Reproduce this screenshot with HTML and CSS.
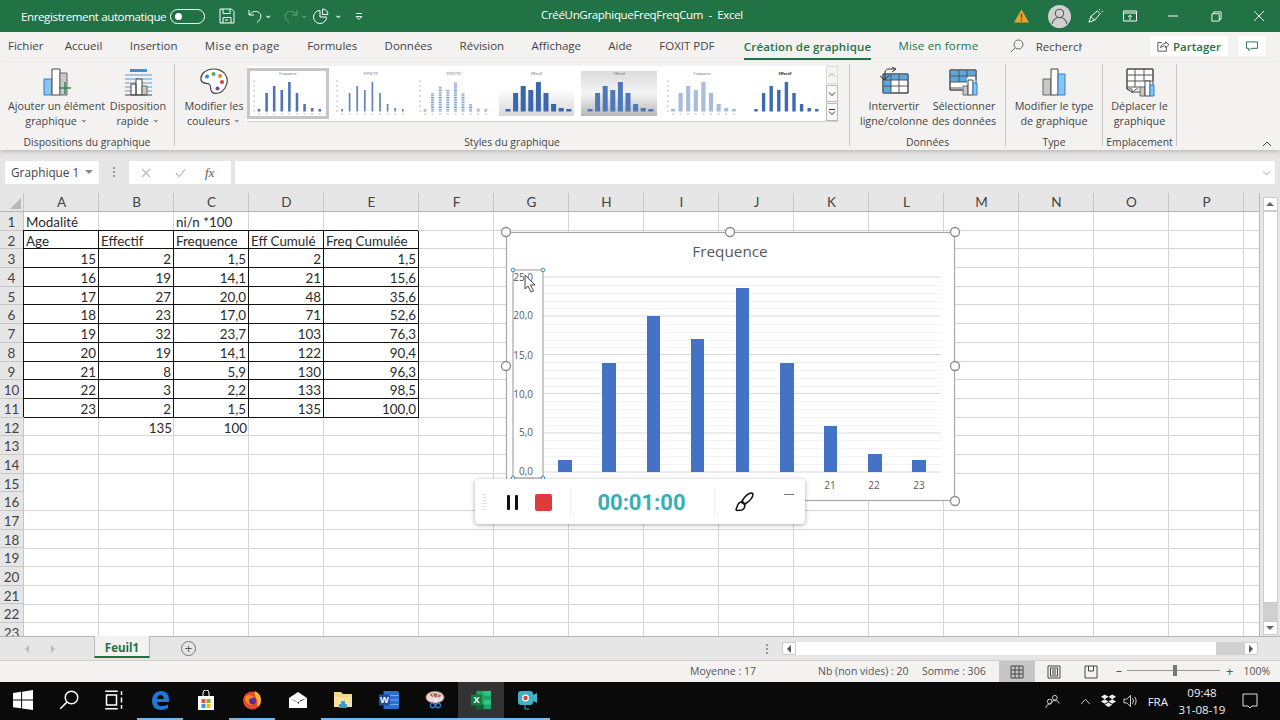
FILE: index.html
```html
<!DOCTYPE html>
<html lang="fr">
<head>
    <meta charset="UTF-8">
    <title>CrééUnGraphiqueFreqFreqCum - Excel</title>
    <link rel="stylesheet" href="styles.css">
</head>
<body>
    <svg class="defs" width="0" height="0">
        <symbol id="thumb-bars" viewBox="0 0 76 45">
            <path d="M9 40.500V38M16.600 40.500V22M24.200 40.500V15M31.800 40.500V19M39.400 40.500V11M47 40.500V22M54.600 40.500V33M62.200 40.500V37M69.800 40.500V38"/>
        </symbol>
        <symbol id="thumb-axis" viewBox="0 0 76 45">
            <path class="ticks" d="M3 10h2M3 15h2M3 20h2M3 25h2M3 30h2M3 35h2M3 40h2M8 43h2M15.600 43h2M23.200 43h2M30.800 43h2M38.400 43h2M46 43h2M53.600 43h2M61.200 43h2M68.800 43h2"/>
        </symbol>
    </svg>

    <!-- barre de titre -->
    <header class="titlebar">
        <span class="autosave">Enregistrement automatique</span>
        <span class="toggle"><i></i></span>
        <svg class="qa qa-save" viewBox="0 0 16 16"><path d="M1 1h11.500L15 3.500V15H1zM4 1v4.500h7V1M4 15v-5.500h8V15M6 12h3" /></svg>
        <svg class="qa qa-undo" viewBox="0 0 16 16"><path d="M2 2v5h5M2.500 7C5 3 9 2.500 12 4.500c3 2.500 2.500 6.500-2 10"/></svg>
        <span class="qa-caret">&#8964;</span>
        <svg class="qa qa-redo" viewBox="0 0 16 16"><path d="M14 2v5H9M13.500 7C11 3 7 2.500 4 4.500c-3 2.500-2.500 6.500 2 10"/></svg>
        <span class="qa-caret dim">&#8964;</span>
        <svg class="qa qa-pie" viewBox="0 0 16 16"><path d="M7 2.500a6.500 6.500 0 1 0 6.500 6.500H7zM9.500 1a6 6 0 0 1 5.500 5.500H9.500z"/></svg>
        <span class="qa-caret">&#8964;</span>
        <svg class="qa qa-more" viewBox="0 0 10 10"><path d="M2 2.500h6M2 5.500h6l-3 3z"/></svg>
        <span class="doc-title">CrééUnGraphiqueFreqFreqCum &nbsp;-&nbsp; Excel</span>
        <div class="title-right">
            <svg class="warn" viewBox="0 0 16 14"><path d="M8 0l8 14H0z" fill="#e9a32c"/><path d="M8 4.500v5M8 10.500v2" stroke="#6b4a12" stroke-width="1.400"/></svg>
            <span class="avatar"><svg viewBox="0 0 22 22"><circle cx="11" cy="8" r="4"/><path d="M4 18c1-5 4-6 7-6s6 1 7 6"/></svg></span>
            <svg class="tb-ico pen" viewBox="0 0 16 16"><path d="M1 14l2-6 7-6 3 3-6 7zM3 8l4 4M12 1l1-1M14.500 3l1.500-.5"/></svg>
            <svg class="tb-ico display" viewBox="0 0 14 12"><path d="M.5 1h13v10H.5zM.5 3h13M7 10V5M5 7l2-2 2 2"/></svg>
            <svg class="tb-ico win-min" viewBox="0 0 12 12"><path d="M1 6h10"/></svg>
            <svg class="tb-ico win-max" viewBox="0 0 12 12"><path d="M1 3h8v8H1zM3 3V1h8v8H9"/></svg>
            <svg class="tb-ico win-close" viewBox="0 0 12 12"><path d="M1 1l10 10M11 1L1 11"/></svg>
        </div>
    </header>

    <!-- onglets -->
    <nav class="tabs">
        <a class="tab-first">Fichier</a><a>Accueil</a><a>Insertion</a><a class="tab-wide">Mise en page</a><a>Formules</a><a>Données</a><a>Révision</a><a>Affichage</a><a>Aide</a><a>FOXIT PDF</a>
        <a class="tab-active">Création de graphique</a>
        <a class="tab-context">Mise en forme</a>
        <span class="search">
            <svg viewBox="0 0 14 14"><circle cx="8.500" cy="5.500" r="4.500"/><path d="M5.300 8.700L.7 13.300"/></svg>
            <span class="search-text">Recherch</span>
        </span>
        <span class="share">
            <svg viewBox="0 0 14 14"><path d="M6 3H1v10h10V8M4 9c1-3 3-5 6-5V2l4 3.500L10 9V7C8 7 6 7.500 4 9z"/></svg>
            Partager
        </span>
        <span class="comment"><svg viewBox="0 0 14 12"><path d="M1 1h12v7H6L3.500 10.500V8H1z"/></svg></span>
    </nav>

    <!-- ruban -->
    <section class="ribbon">
        <div class="group group-layout">
            <div class="group-body">
                <div class="rb-btn btn-add">
                    <svg viewBox="0 0 30 30">
                        <path class="i-blue" d="M2 12h8v16H2z"/>
                        <path class="i-white" d="M10 2h8v26h-8z"/>
                        <path class="i-gray" d="M18 6h7v22h-7z"/>
                        <path d="M23 15v12M17 21h12" fill="none" stroke="#2e8b57" stroke-width="1.500"/>
                    </svg>
                    <span>Ajouter un élément<br>graphique <b class="caret">&#8964;</b></span>
                </div>
                <div class="rb-btn btn-quick">
                    <svg viewBox="0 0 30 30">
                        <path d="M7 2h17v3H7z" fill="#3f8fd6"/>
                        <path d="M2 8h27M2 12h27M2 16h27M2 20h27M2 24h27" stroke="#5b9bd5" fill="none"/>
                        <path class="i-white" d="M8 17h5v11H8zM13 12h6v16h-6z"/>
                        <path class="i-gray" d="M19 19h5v9h-5z"/>
                        <path d="M2 28h27" stroke="#444"/>
                    </svg>
                    <span>Disposition<br>rapide <b class="caret">&#8964;</b></span>
                </div>
            </div>
            <div class="group-label">Dispositions du graphique</div>
        </div>

        <div class="group group-styles">
            <div class="group-body">
                <div class="rb-btn btn-colors">
                    <svg viewBox="0 0 30 30">
                        <path d="M15 2C7 2 1 7 2 13c1 4 6 3 8 4 3 1 0 5 3 8 3 3 10 1 13-4 3-5 3-10 0-14-2-3-7-5-11-5z" fill="#fff" stroke="#444" stroke-width="1.200"/>
                        <circle cx="8" cy="9.500" r="2" fill="#3d85c6"/><circle cx="14.500" cy="7" r="2" fill="#4caf50"/><circle cx="21" cy="9" r="2" fill="#e8862a"/><circle cx="23" cy="15" r="2" fill="#d6403a"/><circle cx="18.500" cy="21.500" r="2" fill="#7b3fa0"/>
                    </svg>
                    <span>Modifier les<br>couleurs <b class="caret">&#8964;</b></span>
                </div>
                <div class="gallery">
                    <div class="thumbs">
                        <div class="thumb thumb-selected"><small>Frequence</small><svg class="t-narrow"><use href="#thumb-axis"/><use href="#thumb-bars"/></svg></div>
                        <div class="thumb"><small>EFFECTIF</small><svg class="t-thin"><use href="#thumb-axis"/><use href="#thumb-bars"/></svg></div>
                        <div class="thumb"><small>EFFECTIF</small><svg class="t-striped"><use href="#thumb-axis"/><use href="#thumb-bars"/></svg></div>
                        <div class="thumb thumb-fade"><small>Effectif</small><svg class="t-wide"><use href="#thumb-bars"/></svg></div>
                        <div class="thumb thumb-dark"><small>Effectif</small><svg class="t-wide t-mid"><use href="#thumb-bars"/></svg></div>
                        <div class="thumb"><small>Frequence</small><svg class="t-pale"><use href="#thumb-axis"/><use href="#thumb-bars"/></svg></div>
                        <div class="thumb"><small class="strong">Effectif</small><svg class="t-solid"><use href="#thumb-bars"/></svg></div>
                    </div>
                    <div class="gallery-scroll">
                        <span class="dim"><svg viewBox="0 0 8 6"><path d="M1 4.500l3-3 3 3"/></svg></span>
                        <span><svg viewBox="0 0 8 6"><path d="M1 1.500l3 3 3-3"/></svg></span>
                        <span><svg viewBox="0 0 8 6"><path d="M1 .5h6M1 2.500l3 3 3-3"/></svg></span>
                    </div>
                </div>
            </div>
            <div class="group-label">Styles du graphique</div>
        </div>

        <div class="group group-data">
            <div class="group-body">
                <div class="rb-btn btn-switch">
                    <svg viewBox="0 0 30 30">
                        <path class="i-white" d="M4 7h25v19H4z"/>
                        <path d="M4 7h25v6H4zM4 13h8v13H4z" fill="#5ba7e0"/>
                        <path d="M4 13h25M4 19h25M12 7v19M20 7v19M4 7h25v19H4z" fill="none" stroke="#555"/>
                        <path d="M1 9l5 4 4-5M6 12V5c0-2 2-3 4-3h6M13 0l4 2-4 3" fill="none" stroke="#333"/>
                    </svg>
                    <span>Intervertir<br>ligne/colonne</span>
                </div>
                <div class="rb-btn btn-select">
                    <svg viewBox="0 0 30 30">
                        <path class="i-white" d="M1 3h26v20H1z"/>
                        <path d="M1 3h26v6H1zM1 9h17v6H1z" fill="#5ba7e0"/>
                        <path d="M1 9h26M1 15h17M1 21h12M10 3v12M18 3v8M1 3h26v10M1 3v20h12" fill="none" stroke="#555"/>
                        <path class="i-gray" d="M14 19h5v9h-5z"/><path class="i-white" d="M19 13h5v15h-5z"/><path class="i-blue" d="M24 16h4v12h-4z"/>
                    </svg>
                    <span>Sélectionner<br>des données</span>
                </div>
            </div>
            <div class="group-label">Données</div>
        </div>

        <div class="group group-type">
            <div class="group-body">
                <div class="rb-btn btn-fill">
                    <svg viewBox="0 0 30 30">
                        <path class="i-gray" d="M4 12h8v16H4z"/><path class="i-white" d="M12 2h7v26h-7z"/><path class="i-blue" d="M19 7h7v21h-7z"/>
                    </svg>
                    <span>Modifier le type<br>de graphique</span>
                </div>
            </div>
            <div class="group-label">Type</div>
        </div>

        <div class="group group-place">
            <div class="group-body">
                <div class="rb-btn btn-fill">
                    <svg viewBox="0 0 30 30">
                        <path class="i-white" d="M2 2h26v18L22 25H7l-5-3z"/>
                        <path d="M2 8h26M2 14h26M2 20h14M10 2v18M19 2v12M2 2h26v12M2 2v20h5v4l4-4h2" fill="none" stroke="#555"/>
                        <path class="i-gray" d="M15 20h5v9h-5z"/><path class="i-white" d="M20 14h5v15h-5z"/><path class="i-blue" d="M25 18h4v11h-4z"/>
                    </svg>
                    <span>Déplacer le<br>graphique</span>
                </div>
            </div>
            <div class="group-label">Emplacement</div>
        </div>

        <svg class="collapse" viewBox="0 0 10 6"><path d="M1 5l4-4 4 4"/></svg>
    </section>

    <!-- barre de formule -->
    <div class="formula">
        <div class="namebox">Graphique 1<i class="tri-down"></i></div>
        <div class="formula-dots"></div>
        <div class="fx-box">
            <svg class="fx-x" viewBox="0 0 10 10"><path d="M1 1l8 8M9 1L1 9"/></svg>
            <svg class="fx-v" viewBox="0 0 12 10"><path d="M1 5l3.500 4L11 1"/></svg>
            <em>fx</em>
        </div>
        <div class="formula-input"><svg viewBox="0 0 10 6"><path d="M1 1l4 4 4-4"/></svg></div>
    </div>

    <!-- feuille -->
    <main class="sheet">
        <div class="sheet-main">
            <div class="col-head">
                <div class="corner"><i></i></div>
                <span>A</span><span>B</span><span>C</span><span>D</span><span class="w-e">E</span>
                <span>F</span><span>G</span><span>H</span><span>I</span><span>J</span><span>K</span><span>L</span><span>M</span><span>N</span><span>O</span><span>P</span><span class="w-rest"></span>
            </div>
            <div class="sheet-body">
                <div class="row-head">
                    <span>1</span><span>2</span><span>3</span><span>4</span><span>5</span><span>6</span><span>7</span><span>8</span><span>9</span><span>10</span><span>11</span><span>12</span><span>13</span><span>14</span><span>15</span><span>16</span><span>17</span><span>18</span><span>19</span><span>20</span><span>21</span><span>22</span><span>23</span>
                </div>
                <div class="cells">
                    <div class="col-lines">
                        <i></i><i></i><i></i><i></i><i class="w-e"></i>
                        <i></i><i></i><i></i><i></i><i></i><i></i><i></i><i></i><i></i><i></i><i></i>
                    </div>
                    <div class="data">
                        <div>Modalité</div><div></div><div>ni/n *100</div><div></div><div></div>
                    </div>
                    <div class="data boxed">
                        <div>Age</div><div>Effectif</div><div>Frequence</div><div>Eff Cumulé</div><div>Freq Cumulée</div>
                        <div class="n">15</div><div class="n">2</div><div class="n">1,5</div><div class="n">2</div><div class="n">1,5</div>
                        <div class="n">16</div><div class="n">19</div><div class="n">14,1</div><div class="n">21</div><div class="n">15,6</div>
                        <div class="n">17</div><div class="n">27</div><div class="n">20,0</div><div class="n">48</div><div class="n">35,6</div>
                        <div class="n">18</div><div class="n">23</div><div class="n">17,0</div><div class="n">71</div><div class="n">52,6</div>
                        <div class="n">19</div><div class="n">32</div><div class="n">23,7</div><div class="n">103</div><div class="n">76,3</div>
                        <div class="n">20</div><div class="n">19</div><div class="n">14,1</div><div class="n">122</div><div class="n">90,4</div>
                        <div class="n">21</div><div class="n">8</div><div class="n">5,9</div><div class="n">130</div><div class="n">96,3</div>
                        <div class="n">22</div><div class="n">3</div><div class="n">2,2</div><div class="n">133</div><div class="n">98,5</div>
                        <div class="n">23</div><div class="n">2</div><div class="n">1,5</div><div class="n">135</div><div class="n">100,0</div>
                    </div>
                    <div class="data">
                        <div></div><div class="n">135</div><div class="n">100</div><div></div><div></div>
                    </div>

                    <!-- graphique posé sur la feuille -->
                    <svg class="chart" viewBox="500 226 462 282" width="462" height="282">
                        <rect class="chart-frame" x="506.500" y="232.500" width="448" height="268"/>
                        <text class="chart-title" x="730" y="257">Frequence</text>
                        <path class="minor" d="M543 285.500h398M543 293.500h398M543 301.500h398M543 308.500h398M543 324.500h398M543 332.500h398M543 340.500h398M543 347.500h398M543 362.500h398M543 370.500h398M543 378.500h398M543 386.500h398M543 401.500h398M543 409.500h398M543 417.500h398M543 425.500h398M543 440.500h398M543 448.500h398M543 456.500h398M543 464.500h398"/>
                        <path class="major" d="M543 277h398M543 316h398M543 354.500h398M543 393.500h398M543 433h398M543 472h398"/>
                        <g class="bars">
                            <rect x="558" y="460" width="14" height="12"/>
                            <rect x="602" y="363" width="14" height="109"/>
                            <rect x="647" y="316" width="13" height="156"/>
                            <rect x="691" y="339" width="13" height="133"/>
                            <rect x="736" y="288" width="13" height="184"/>
                            <rect x="780" y="363" width="14" height="109"/>
                            <rect x="824" y="426" width="13" height="46"/>
                            <rect x="868" y="454" width="14" height="18"/>
                            <rect x="912" y="460" width="14" height="12"/>
                        </g>
                        <g class="axis-text val">
                            <text x="533" y="281">25,0</text><text x="533" y="319">20,0</text><text x="533" y="359">15,0</text><text x="533" y="398">10,0</text><text x="533" y="436">5,0</text><text x="533" y="475">0,0</text>
                        </g>
                        <g class="axis-text cat">
                            <text x="830" y="489">21</text><text x="874" y="489">22</text><text x="919" y="489">23</text>
                        </g>
                        <rect class="axis-sel" x="513" y="270" width="30" height="208"/>
                        <g class="axis-handles">
                            <circle cx="513" cy="270" r="1.800"/><circle cx="543" cy="270" r="1.800"/><circle cx="513" cy="478" r="1.800"/><circle cx="543" cy="478" r="1.800"/>
                        </g>
                        <g class="handles">
                            <circle cx="506" cy="232" r="4.500"/><circle cx="730" cy="232" r="4.500"/><circle cx="955" cy="232" r="4.500"/>
                            <circle cx="506" cy="366" r="4.500"/><circle cx="955" cy="366" r="4.500"/>
                            <circle cx="506" cy="501" r="4.500"/><circle cx="730" cy="501" r="4.500"/><circle cx="955" cy="501" r="4.500"/>
                        </g>
                        <path class="pointer" d="M525 275v14l3-3 3 6 2.500-1-3-6h4.500z"/>
                    </svg>

                    <!-- enregistreur -->
                    <div class="recorder">
                        <span class="grip"></span>
                        <span class="rec-pause"><i></i><i></i></span>
                        <span class="rec-stop"></span>
                        <span class="rec-sep"></span>
                        <span class="rec-time">00:01:00</span>
                        <span class="rec-sep"></span>
                        <svg class="rec-brush" viewBox="0 0 20 20"><path d="M18 1c-3 0-7 3-10 8l3 3c5-3 8-7 8-10zM7 10c-2 .5-3 2-3.500 3.500L2 17.500l1 1 5-.5c2-1 3-3 3-5z"/></svg>
                        <span class="rec-min"></span>
                    </div>
                </div>
            </div>
        </div>
        <div class="vscroll">
            <span class="vbtn"><i class="tri tri-up"></i></span>
            <span class="vtrack"><span class="vthumb"></span></span>
            <span class="vbtn"><i class="tri tri-dn"></i></span>
        </div>
    </main>

    <!-- onglets de feuille -->
    <div class="sheetbar">
        <span class="nav-arrows"><i class="tri tri-lt"></i><i class="tri tri-rt"></i></span>
        <span class="sheet-tab">Feuil1</span>
        <span class="add-sheet">+</span>
        <span class="sheetbar-dots"></span>
        <div class="hscroll">
            <span class="hbtn"><i class="tri tri-lt dark"></i></span>
            <span class="hthumb"></span>
            <span class="hbtn"><i class="tri tri-rt dark"></i></span>
        </div>
    </div>

    <!-- barre d'état -->
    <footer class="status">
        <span class="st-avg">Moyenne : 17</span>
        <span class="st-count">Nb (non vides) : 20</span>
        <span class="st-sum">Somme : 306</span>
        <span class="view view-on"><svg viewBox="0 0 14 14"><path d="M1 1h12v12H1zM1 5h12M1 9h12M5 1v12M9 1v12"/></svg></span>
        <span class="view"><svg viewBox="0 0 14 14"><path d="M1 1h12v12H1zM3.500 3h7v8h-7zM5 5h4M5 7h4M5 9h4"/></svg></span>
        <span class="view"><svg viewBox="0 0 14 14"><path d="M1 1h12v12H1zM4.500 1v5h5V1"/></svg></span>
        <span class="zoom-minus">&#8211;</span>
        <span class="slider"><i></i></span>
        <span class="zoom-plus">+</span>
        <span class="zoom-val">100%</span>
    </footer>

    <!-- barre des tâches -->
    <div class="taskbar">
        <span class="task"><svg viewBox="0 0 16 16"><path d="M0 2.300l6.500-.9v6.200H0zM7.300 1.300L16 0v7.600H7.300zM0 8.400h6.500v6.200L0 13.700zM7.300 8.400H16V16l-8.700-1.200z" fill="#fff"/></svg></span>
        <span class="task"><svg viewBox="0 0 16 16"><circle cx="10" cy="6" r="5" fill="none" stroke="#fff" stroke-width="1.200"/><path d="M6.500 9.500L1 15" stroke="#fff" stroke-width="1.200"/></svg></span>
        <span class="task"><svg viewBox="0 0 16 16"><path d="M1 1h10M1 15h10M2 4h8v8H2zM14 1v3M14 6v4M14 12v3" fill="none" stroke="#fff" stroke-width="1.200"/></svg></span>
        <span class="task task-open"><svg viewBox="0 0 18 20"><path d="M1 11C1 5 5 1 10 1c5 0 8 3 8 9v2H6c0 3 2 4 5 4 2 0 4-.5 6-1.500V18c-2 1-4 2-7 2-6 0-9-4-9-9zm5-2h7c0-2-1.500-4-3.500-4S6 7 6 9z" fill="#1e78d6"/></svg></span>
        <span class="task"><svg viewBox="0 0 18 20"><path d="M1 6h16v14H1z" fill="#fff"/><path d="M6 6V3a3 3 0 0 1 6 0v3" fill="none" stroke="#fff"/><path d="M4.500 9h4v4h-4z" fill="#e8562a"/><path d="M9.500 9h4v4h-4z" fill="#72b535"/><path d="M4.500 14h4v4h-4z" fill="#2e9be0"/><path d="M9.500 14h4v4h-4z" fill="#f2b71d"/></svg></span>
        <span class="task task-open"><svg viewBox="0 0 20 20"><circle cx="10" cy="10.500" r="9" fill="#e5482d"/><path d="M13 1c4 2 6 5 6 9 0 3-1 5-3 7-1-2 0-6-2-9-1-2-2-4-1-7z" fill="#f7b22e"/><circle cx="9.500" cy="10.500" r="4.500" fill="#5b2a9b"/><path d="M3 7c3-3 8-2 10 1-3-1-6 0-6 3 0 2 2 4 5 3-3 2-9 1-9-7z" fill="#f48a24"/></svg></span>
        <span class="task"><svg viewBox="0 0 20 16"><path d="M1 6l9-6 9 6v10H1z" fill="#fff"/><path d="M1 6l9 4.500L19 6l-7 2.500-1.500 3.500L8 9z" fill="#111"/></svg></span>
        <span class="task task-open"><svg viewBox="0 0 20 18"><path d="M1 1h7l2 2h9v13H1z" fill="#f1d78a"/><path d="M1 6h18v10H1z" fill="#f7e3a1"/><path d="M6 13h8v4H6z" fill="#3f9bc9"/><path d="M8 10h4v3H8z" fill="#3f9bc9"/></svg></span>
        <span class="task task-open"><svg viewBox="0 0 22 20"><path d="M5 0h15a2 2 0 0 1 2 2v16a2 2 0 0 1-2 2H5z" fill="#2b6fd0"/><path d="M8 5h14M8 10h14M8 15h14" stroke="#7fb0ec"/><rect y="4" width="12" height="12" fill="#1b4ea3"/><text class="word-w" x="6" y="13.500">W</text></svg></span>
        <span class="task task-open"><svg viewBox="0 0 22 20"><ellipse cx="11" cy="7" rx="10" ry="6.500" fill="#e8dcd8" stroke="#b55a5a"/><path d="M5 4c4-2 9-2 13 1-3 3-9 4-13-1z" fill="#b55a5a"/><path d="M8 3l6 11M15 3l-5 11" stroke="#fff"/><circle cx="8.500" cy="16" r="2.500" fill="none" stroke="#2e7fc9" stroke-width="1.500"/><circle cx="14.500" cy="16" r="2.500" fill="none" stroke="#2e7fc9" stroke-width="1.500"/></svg></span>
        <span class="task task-open task-active"><svg viewBox="0 0 22 20"><path d="M6 0h16v20H6z" fill="#21a366"/><path d="M14 0h8v5h-8zM14 10h8v5h-8z" fill="#33c481"/><path d="M6 15h8v5H6z" fill="#185c37"/><rect y="4" width="12" height="12" fill="#107c41"/><text class="word-w" x="6" y="13.500">X</text></svg></span>
        <span class="task task-open"><svg viewBox="0 0 20 20"><rect x="1" y="1" width="15" height="14" rx="3" fill="#41b0c4"/><path d="M16 5l4-2v10l-4-2z" fill="#41b0c4"/><circle cx="8.500" cy="8" r="3.500" fill="#fff"/><circle cx="8.500" cy="8" r="2.200" fill="#d6403a"/><path d="M8 15v4h4" fill="none" stroke="#41b0c4"/></svg></span>

        <div class="tray">
            <svg class="tray-people" viewBox="0 0 16 16"><circle cx="10.500" cy="4" r="2.500"/><path d="M6 11c.5-3 2-4 4.500-4S15 8 15 10"/><circle cx="5" cy="8" r="2.500"/><path d="M1 15c.3-3 2-4 4-4"/></svg>
            <svg class="tray-up" viewBox="0 0 12 8"><path d="M1 7l5-5.500L11 7"/></svg>
            <svg class="tray-box" viewBox="0 0 16 14"><path d="M4 0l4 2.500L4 5 0 2.500zM12 0l4 2.500L12 5 8 2.500zM4 5l4 2.500L4 10 0 7.500zM12 5l4 2.500-4 2.500-4-2.500zM4 11l4-2.500 4 2.500-4 2.500z" fill="#eee"/></svg>
            <svg class="tray-vol" viewBox="0 0 16 14"><path d="M1 5h3l4-4v12L4 9H1zM10 4c1.500 2 1.500 4 0 6M12.500 2.500c2 3 2 6 0 9"/></svg>
            <span class="tray-lang">FRA</span>
            <span class="tray-clock">09:48<br>31-08-19</span>
            <svg class="tray-notif" viewBox="0 0 16 16"><path d="M1 1h14v12H10l-2 2-2-2H1z"/></svg>
        </div>
    </div>
</body>
</html>
```

FILE: styles.css
```css
* {
    margin: 0;
    padding: 0;
    box-sizing: border-box;
}

html, body {
    width: 1280px;
    height: 720px;
    overflow: hidden;
}

body {
    display: flex;
    flex-direction: column;
    font-family: "Open Sans", "Noto Sans", sans-serif;
    font-size: 12px;
    color: #444;
    background: #f3f2f1;
}

.defs {
    position: absolute;
}

/* barre de titre */
.titlebar {
    height: 32px;
    flex: none;
    display: flex;
    align-items: center;
    background: #217346;
    color: #fff;
    padding-left: 21px;
    position: relative;
}

.autosave {
    width: 149px;
    font-size: 11.500px;
    letter-spacing: -0.370px;
    white-space: nowrap;
}

.toggle {
    width: 35px;
    height: 15px;
    border: 1px solid #fff;
    border-radius: 8px;
    display: flex;
    align-items: center;
    padding-left: 4px;
    margin-right: 14px;
}

.toggle i {
    width: 7px;
    height: 7px;
    border-radius: 50%;
    background: #fff;
}

.qa {
    width: 16px;
    height: 16px;
    fill: none;
    stroke: #fff;
    stroke-width: 1;
}

.qa-undo { margin-left: 12px; }
.qa-redo { margin-left: 10px; opacity: 0.35; }
.qa-pie { margin-left: 4px; }
.qa-more { width: 10px; height: 10px; margin-left: 11px; }

.qa-caret {
    width: 10px;
    font-size: 10px;
    line-height: 1;
    text-align: center;
    padding-bottom: 5px;
}

.qa-pie + .qa-caret { margin-left: 4px; }
.qa-caret.dim { opacity: 0.35; }

.doc-title {
    position: absolute;
    left: 541px;
    top: 7px;
    font-size: 11.500px;
    letter-spacing: -0.320px;
    white-space: nowrap;
}

.title-right {
    margin-left: auto;
    display: flex;
    align-items: center;
    padding-right: 15px;
}

.warn { width: 15px; height: 14px; margin-right: 19px; }

.avatar {
    width: 23px;
    height: 23px;
    border-radius: 50%;
    background: #d0d0d0;
    margin-right: 17px;
}

.avatar svg {
    display: block;
    fill: none;
    stroke: #555;
    stroke-width: 1;
}

.tb-ico {
    fill: none;
    stroke: #fff;
    stroke-width: 1;
}

.pen { width: 15px; height: 15px; margin-right: 20px; }
.display { width: 14px; height: 12px; margin-right: 30px; }
.win-min { width: 12px; height: 12px; margin-right: 32px; }
.win-max { width: 11px; height: 11px; margin-right: 31px; }
.win-close { width: 12px; height: 12px; }

/* onglets */
.tabs {
    height: 30px;
    flex: none;
    display: flex;
    align-items: center;
    gap: 27.300px;
    padding-left: 8px;
    font-size: 11.500px;
    white-space: nowrap;
    color: #444;
}

.tabs a {
    line-height: 25px;
    height: 28px;
}

.tab-first { margin-right: -6px; }
.tab-wide { letter-spacing: 0.350px; }

.tabs a.tab-active {
    color: #217346;
    font-weight: 600;
    letter-spacing: 0.150px;
    border-bottom: 2px solid #217346;
    height: 26px;
    margin: -1px 0 0 2px;
    line-height: 26px;
}

.tab-context {
    color: #217346;
    letter-spacing: 0.200px;
}

.search {
    display: flex;
    align-items: center;
    margin: -2px 0 0 4px;
}

.search svg {
    width: 14px;
    height: 14px;
    fill: none;
    stroke: #666;
    margin-right: 12px;
}

.search-text {
    width: 46px;
    overflow: hidden;
}

.share {
    display: flex;
    align-items: center;
    justify-content: center;
    gap: 4px;
    width: 78px;
    height: 20px;
    margin-left: 41px;
    margin-top: -2px;
    background: #fff;
    color: #217346;
    font-weight: 600;
}

.share svg {
    width: 12px;
    height: 12px;
    fill: none;
    stroke: #444;
}

.comment {
    width: 28px;
    height: 20px;
    margin-left: -17px;
    margin-top: -2px;
    background: #fff;
    display: flex;
    align-items: center;
    justify-content: center;
}

.comment svg {
    width: 14px;
    height: 11px;
    fill: none;
    stroke: #217346;
}

/* ruban */
.ribbon {
    height: 88px;
    flex: none;
    display: flex;
    position: relative;
    padding-top: 2px;
    font-size: 10.800px;
    color: #444;
    background: #f3f2f1;
    box-shadow: 0 2px 4px rgba(0, 0, 0, 0.18);
    z-index: 2;
}

.group {
    height: 82px;
    display: flex;
    flex-direction: column;
    border-right: 1px solid #c8c6c4;
    flex: none;
}

.group-body {
    flex: 1;
    display: flex;
}

.group-label {
    text-align: center;
    line-height: 14px;
    font-size: 10.400px;
    white-space: nowrap;
    margin-bottom: -3px;
}

.group-layout { width: 175px; }
.group-styles { width: 675px; }
.group-data { width: 156px; }
.group-type { width: 97px; }
.group-place { width: 74px; }

.rb-btn {
    display: flex;
    flex-direction: column;
    align-items: center;
    text-align: center;
    line-height: 15px;
    white-space: nowrap;
    padding-top: 3px;
}

.rb-btn svg {
    width: 30px;
    height: 30px;
    margin-bottom: 1px;
}

.btn-add { width: 107px; margin-left: 3px; }
.btn-quick { width: 56px; }
.btn-colors { width: 60px; margin-left: 9px; }
.btn-switch { width: 74px; margin-left: 7px; }
.btn-select { width: 66px; }
.btn-fill { width: 100%; }

.caret {
    font-weight: 400;
    font-size: 9px;
    position: relative;
    top: -3px;
}

.i-blue { fill: #8cc4ec; stroke: #2b7cd3; }
.i-white { fill: #fff; stroke: #444; }
.i-gray { fill: #c8c8c6; stroke: #666; }

.gallery {
    width: 591px;
    height: 56px;
    margin: 2px 0 0 3px;
    display: flex;
    border-bottom: 1px solid #d0d0d0;
}

.thumbs {
    width: 579px;
    background: #fff;
    display: flex;
    gap: 7px;
    padding: 5px 3px;
}

.thumb {
    width: 76px;
    height: 45px;
    position: relative;
    text-align: center;
}

.thumb small {
    display: block;
    font-size: 3.500px;
    line-height: 6px;
    color: #666;
}

.thumb small.strong { color: #222; font-weight: 700; }

.thumb svg {
    position: absolute;
    left: 0;
    top: 0;
    width: 76px;
    height: 45px;
    fill: none;
    stroke-width: 2.400px;
    stroke: #4a72b8;
}

.ticks {
    stroke: #bbb;
    stroke-width: 1px;
    stroke-dasharray: none;
}

.thumb-selected { outline: 3px solid #c6c6c6; }
.thumb-fade { background: linear-gradient(#fff 40%, #d8d8d8); }
.thumb-dark { background: linear-gradient(#dcdcdc, #f4f4f4 50%, #b8b8b8); }

.thumb svg.t-narrow { stroke-width: 2.600px; stroke: #4f74b3; }
.thumb svg.t-solid { stroke-width: 3.400px; stroke: #3f69b0; }
.thumb svg.t-thin { stroke-width: 1.700px; stroke: #6285bf; }
.thumb svg.t-striped { stroke-width: 3px; stroke: #7b9aca; stroke-dasharray: 1 0.700; }
.thumb svg.t-wide { stroke-width: 5px; stroke: #3a66ae; }
.thumb svg.t-mid { stroke: #4f78bb; }
.thumb svg.t-pale { stroke-width: 4.200px; stroke: #a9bcdc; }

.gallery-scroll {
    width: 12px;
    display: flex;
    flex-direction: column;
    gap: 1px;
}

.gallery-scroll span {
    flex: 1;
    display: flex;
    align-items: center;
    justify-content: center;
    border: 1px solid #bbb;
    background: #f8f8f8;
}

.gallery-scroll .dim { opacity: 0.4; }

.gallery-scroll svg {
    width: 8px;
    height: 6px;
    margin: 0;
    fill: none;
    stroke: #333;
}

.collapse {
    position: absolute;
    left: 1262px;
    top: 79px;
    width: 10px;
    height: 6px;
    fill: none;
    stroke: #444;
}

/* barre de formule */
.formula {
    height: 43px;
    flex: none;
    display: flex;
    align-items: flex-start;
    background: #e6e6e6;
    padding: 11px 5px 0;
}

.namebox {
    width: 94px;
    height: 23px;
    background: #fff;
    font-size: 11.800px;
    line-height: 23px;
    padding-left: 6px;
    position: relative;
}

.tri-down {
    position: absolute;
    right: 6px;
    top: 9px;
    border: 4px solid transparent;
    border-top-color: #888;
    border-bottom-width: 0;
}

.formula-dots {
    width: 30px;
    height: 14px;
    margin-top: 4px;
    background: radial-gradient(circle, #999 1px, transparent 1.200px) center / 2px 4px repeat-y;
}

.fx-box {
    width: 102px;
    height: 23px;
    background: #fff;
    display: flex;
    align-items: center;
}

.fx-x {
    width: 10px;
    height: 10px;
    margin-left: 12px;
    fill: none;
    stroke: #bbb;
    stroke-width: 1.300;
}

.fx-v {
    width: 11px;
    height: 10px;
    margin-left: 24px;
    fill: none;
    stroke: #bbb;
    stroke-width: 1.300;
}

.fx-box em {
    margin-left: 19px;
    font-family: "Liberation Serif", serif;
    font-size: 13px;
    color: #555;
}

.formula-input {
    width: 1040px;
    height: 23px;
    margin-left: 4px;
    background: #fff;
    display: flex;
    align-items: center;
    justify-content: flex-end;
    padding-right: 4px;
}

.formula-input svg {
    width: 9px;
    height: 6px;
    fill: none;
    stroke: #999;
}

/* feuille */
.sheet {
    height: 443px;
    flex: none;
    display: flex;
    background: #fff;
    overflow: hidden;
    font-family: "Lato", "Open Sans", sans-serif;
}

.sheet-main {
    width: 1260px;
    flex: none;
    display: flex;
    flex-direction: column;
    border-right: 1px solid #b8b8b8;
}

.col-head {
    height: 19px;
    flex: none;
    display: flex;
    background: #e6e6e6;
    border-bottom: 1px solid #b4b4b4;
    font-size: 13.500px;
    color: #444;
}

.corner {
    width: 24px;
    flex: none;
    position: relative;
    border-right: 1px solid #c6c6c6;
}

.corner i {
    position: absolute;
    right: 2px;
    bottom: 2px;
    border-style: solid;
    border-width: 0 0 11px 11px;
    border-color: transparent transparent #b8b8b8 transparent;
}

.col-head span {
    width: 75px;
    flex: none;
    padding-left: 1px;
    text-align: center;
    line-height: 19px;
    border-right: 1px solid #c6c6c6;
}

.col-head .w-rest { border-right: 0; width: 15px; }

.col-head .w-e, .col-lines .w-e { width: 95px; }

.sheet-body {
    flex: 1;
    display: flex;
    min-height: 0;
}

.row-head {
    width: 24px;
    flex: none;
    background: #e6e6e6;
    border-right: 1px solid #c6c6c6;
    font-size: 13.500px;
    color: #444;
}

.row-head span {
    display: block;
    height: 18.700px;
    line-height: 20px;
    text-align: center;
    border-bottom: 1px solid #c6c6c6;
}

.cells {
    flex: 1;
    position: relative;
    background: repeating-linear-gradient(to bottom, transparent 0, transparent 17.700px, #d4d4d4 17.700px, #d4d4d4 18.700px);
}

.col-lines {
    position: absolute;
    inset: 0;
    display: flex;
}

.col-lines i {
    width: 75px;
    flex: none;
    border-right: 1px solid #d4d4d4;
}

.data {
    display: grid;
    grid-template-columns: 75px 75px 75px 75px 95px;
    grid-auto-rows: 18.700px;
    width: 395px;
    position: relative;
    font-size: 13.400px;
    line-height: 21px;
    color: #2a2a2a;
}

.data > div {
    padding: 0 2px;
    white-space: nowrap;
}

.data .n {
    text-align: right;
}

.boxed {
    box-shadow: -1px -1px 0 #111;
}

.boxed > div {
    border-right: 1px solid #111;
    border-bottom: 1px solid #111;
}

/* graphique */
.chart {
    position: absolute;
    left: 476px;
    top: 14px;
    font-family: "Open Sans", sans-serif;
}

.chart-frame {
    fill: #fff;
    stroke: #a8a8a8;
    stroke-width: 1.200;
}

.chart-title {
    font-size: 15.300px;
    fill: #595959;
    text-anchor: middle;
}

.major { stroke: #d9d9d9; fill: none; }
.minor { stroke: #f2f2f2; fill: none; }
.bars rect { fill: #4472c4; }

.axis-text {
    font-size: 10px;
    fill: #595959;
}

.val { text-anchor: end; }
.cat { text-anchor: middle; }

.axis-sel {
    fill: none;
    stroke: #a8a8a8;
    stroke-width: 1.200;
}

.axis-handles circle {
    fill: #fff;
    stroke: #3c8fc9;
    stroke-width: 1;
}

.handles circle {
    fill: #fff;
    stroke: #8a8a8a;
    stroke-width: 1.300;
}

.pointer {
    fill: #fff;
    stroke: #333;
    stroke-width: 0.900;
}

/* enregistreur */
.recorder {
    position: absolute;
    left: 451px;
    top: 267px;
    width: 330px;
    height: 45px;
    padding-top: 1px;
    background: #fff;
    border-radius: 4px;
    box-shadow: 0 1px 4px rgba(0, 0, 0, 0.35);
    display: flex;
    align-items: center;
    font-family: "Roboto", sans-serif;
}

.grip {
    width: 5px;
    height: 16px;
    margin-left: 7px;
    background: repeating-linear-gradient(to bottom, #e4e4e4 0, #e4e4e4 1px, transparent 1px, transparent 3px);
}

.rec-pause {
    display: flex;
    gap: 5px;
    margin-left: 20px;
}

.rec-pause i {
    width: 3px;
    height: 15px;
    background: #111;
    border-radius: 1px;
}

.rec-stop {
    width: 17px;
    height: 17px;
    margin-left: 17px;
    background: #e03a3a;
    border-radius: 2px;
}

.rec-sep {
    width: 1px;
    height: 28px;
    background: #eee;
    margin-left: 18px;
}

.rec-time {
    width: 143px;
    padding-right: 2px;
    text-align: center;
    font-size: 22px;
    font-weight: 700;
    color: #38aeb9;
}

.rec-time + .rec-sep {
    margin-left: 0;
}

.rec-brush {
    width: 20px;
    height: 20px;
    margin-left: 19px;
    fill: none;
    stroke: #111;
    stroke-width: 1.500;
}

.rec-min {
    width: 10px;
    height: 1px;
    background: #777;
    margin: -16px 0 0 30px;
}

/* ascenseurs */
.vscroll {
    flex: 1;
    background: #e6e6e6;
    display: flex;
    flex-direction: column;
    align-items: center;
    padding: 4px 0 1px;
}

.vbtn {
    width: 15px;
    height: 14px;
    flex: none;
    background: #fff;
    border: 1px solid #ccc;
    display: flex;
    align-items: center;
    justify-content: center;
}

.vtrack {
    width: 15px;
    flex: 1;
    background: #d0d0d0;
}

.vthumb {
    display: block;
    height: 392px;
    background: #fff;
    border: 1px solid #ccc;
}

.tri {
    display: block;
    border: 4px solid transparent;
    width: 0;
    height: 0;
}

.tri-up { border-bottom-color: #666; border-top-width: 0; }
.tri-dn { border-top-color: #666; border-bottom-width: 0; }
.tri-lt { border-right-color: #bbb; border-left-width: 0; }
.tri-rt { border-left-color: #bbb; border-right-width: 0; }
.tri-lt.dark { border-right-color: #555; }
.tri-rt.dark { border-left-color: #555; }

.sheetbar {
    height: 25px;
    flex: none;
    display: flex;
    align-items: flex-start;
    background: #e6e6e6;
    border-top: 1px solid #b4b4b4;
    border-bottom: 1px solid #d0d0d0;
    position: relative;
}

.nav-arrows {
    display: flex;
    gap: 22px;
    margin: 8px 0 0 25px;
    width: 69px;
}

.sheet-tab {
    width: 56px;
    height: 22px;
    margin-top: -1px;
    background: #f3f2f1;
    border: 1px solid #bbb;
    border-top: 0;
    border-bottom: 2px solid #217346;
    color: #217346;
    font-weight: 700;
    font-size: 11.500px;
    line-height: 24px;
    text-align: center;
}

.add-sheet {
    width: 15px;
    height: 15px;
    margin: 4px 0 0 31px;
    border: 1px solid #777;
    border-radius: 50%;
    font-size: 13px;
    line-height: 12px;
    text-align: center;
    color: #555;
}

.sheetbar-dots {
    width: 3px;
    height: 12px;
    margin: 6px 0 0 569px;
    background: radial-gradient(circle, #999 1px, transparent 1.200px) center / 2px 4px repeat-y;
}

.hscroll {
    width: 476px;
    height: 13px;
    margin: 5px 0 0 14px;
    display: flex;
    background: #d0d0d0;
}

.hbtn {
    width: 14px;
    background: #fff;
    border: 1px solid #ccc;
    display: flex;
    align-items: center;
    justify-content: center;
}

.hthumb {
    width: 420px;
    margin-right: 28px;
    background: #fff;
}

/* barre d'état */
.status {
    height: 21px;
    flex: none;
    display: flex;
    align-items: center;
    padding-bottom: 2px;
    background: #f3f2f1;
    font-size: 10.500px;
    color: #555;
    white-space: nowrap;
}

.st-avg { margin-left: 690px; width: 128px; }
.st-count { width: 104px; }
.st-sum { width: 77px; }

.view {
    width: 36px;
    height: 21px;
    margin: 2px 1px 0 0;
    display: flex;
    align-items: center;
    justify-content: center;
}

.view-on { background: #c6c6c6; }

.view svg {
    width: 14px;
    height: 14px;
    fill: none;
    stroke: #444;
}

.zoom-minus { margin-left: 6px; font-size: 12px; }

.slider {
    width: 93px;
    height: 1px;
    background: #999;
    margin: 0 6px 0 5px;
    position: relative;
}

.slider i {
    position: absolute;
    left: 46px;
    top: -5px;
    width: 4px;
    height: 11px;
    background: #777;
}

.zoom-plus { font-size: 13px; }
.zoom-val { margin-left: 10px; }

/* barre des tâches */
.taskbar {
    height: 38px;
    flex: none;
    display: flex;
    background: #0a0a0a;
    color: #eee;
    position: relative;
}

.task {
    width: 45.800px;
    height: 38px;
    flex: none;
    display: flex;
    align-items: center;
    justify-content: center;
    border-bottom: 2px solid transparent;
}

.task svg {
    width: 20px;
    height: 20px;
}

.task-open {
    border-bottom-color: #7ab8e8;
}

.task-active {
    background: #333;
}

.word-w {
    font-size: 10px;
    font-weight: 700;
    fill: #fff;
    text-anchor: middle;
    font-family: "Open Sans", sans-serif;
}

.tray {
    margin-left: auto;
    display: flex;
    align-items: center;
    padding-right: 22px;
    font-size: 11.500px;
}

.tray svg {
    fill: none;
    stroke: #ddd;
}

.tray-people { width: 15px; height: 15px; margin-right: 20px; }
.tray-up { width: 11px; height: 7px; margin-right: 10px; }
.tray svg.tray-box { width: 15px; height: 14px; margin-right: 7px; stroke: none; }
.tray-vol { width: 15px; height: 14px; margin-right: 10px; }
.tray-lang { margin-right: 9px; }

.tray-clock {
    width: 50px;
    text-align: center;
    line-height: 17px;
    margin-right: 15px;
}

.tray-notif { width: 16px; height: 16px; }
```
